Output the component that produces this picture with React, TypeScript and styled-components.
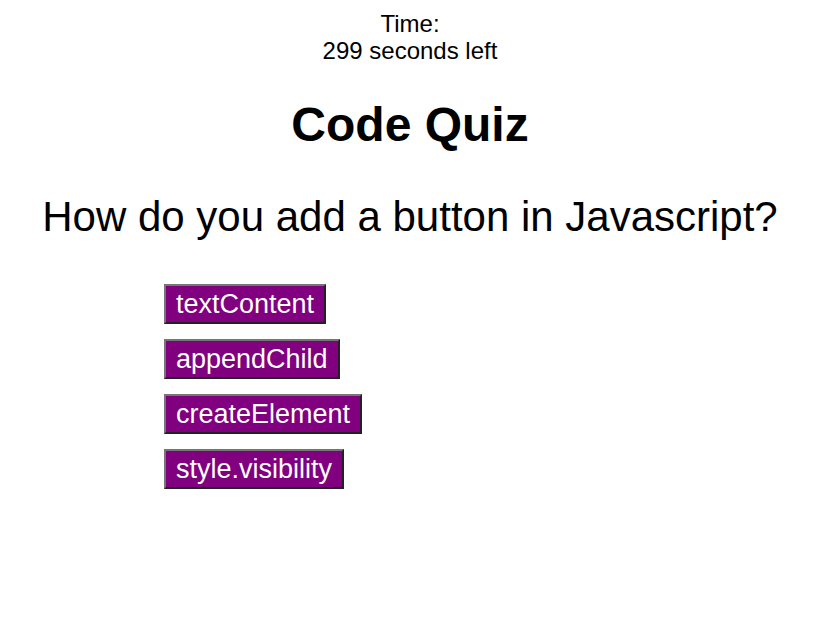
import React from 'react';
import styled, { createGlobalStyle } from 'styled-components';

const GlobalStyle = createGlobalStyle`
  html, body {
    margin: 0;
    padding: 0;
    background: #fff;
  }
  body {
    font-family: "Liberation Sans", Arial, sans-serif;
    color: #000;
  }
`;

const choices = ['textContent', 'appendChild', 'createElement', 'style.visibility'];

const App: React.FC = () => (
  <>
    <GlobalStyle />
    <Page>
      <Timer>
        Time:
        <br />
        299 seconds left
      </Timer>
      <Title>Code Quiz</Title>
      <Question>How do you add a button in Javascript?</Question>
      <Choices>
        {choices.map((c) => (
          <Choice key={c}>{c}</Choice>
        ))}
      </Choices>
    </Page>
  </>
);

export default App;

const Page = styled.main`
  padding: 10px 9px 0 0;
  text-align: center;
`;

const Timer = styled.div`
  font-size: 24px;
  line-height: 27px;
`;

const Title = styled.h1`
  font-size: 48px;
  font-weight: bold;
  margin: 33px 0 0;
  line-height: 55px;
`;

const Question = styled.h2`
  font-size: 42px;
  font-weight: normal;
  margin: 41px 0 0;
  line-height: 48px;
`;

const Choices = styled.div`
  display: flex;
  flex-direction: column;
  align-items: flex-start;
  gap: 15px;
  margin: 43px 0 0 164px;
`;

const Choice = styled.button`
  font-family: "Liberation Sans", Arial, sans-serif;
  font-size: 27px;
  line-height: 30px;
  height: 40px;
  padding: 0 10px;
  background: #800080;
  color: #fff;
  border-style: solid;
  border-width: 2px;
  border-color: #767676 #222 #222 #767676;
  cursor: pointer;
`;
